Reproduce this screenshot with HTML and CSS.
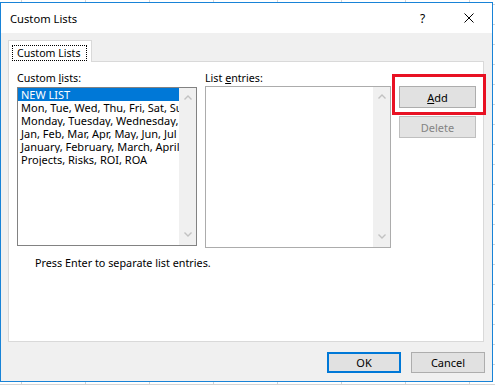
FILE: index.html
```html
<!DOCTYPE html>
<html lang="en">
<head>
    <meta charset="UTF-8">
    <title>Custom Lists</title>
    <link rel="stylesheet" href="styles.css">
</head>
<body>
    <div class="dialog">
        <div class="titlebar">
            <span class="title">Custom Lists</span>
            <span class="help">?</span>
            <span class="close">
                <svg width="10" height="10" viewBox="0 0 10 10">
                    <path d="M0.5 0.5 L9.5 9.5 M9.5 0.5 L0.5 9.5" stroke="#000" stroke-width="1" fill="none"/>
                </svg>
            </span>
        </div>

        <div class="content">
            <div class="tabs">
                <div class="tab"><span class="tab-label">Custom Lists</span></div>
            </div>
            <div class="panel">
                <div class="columns">
                    <div class="col col-lists">
                        <div class="field-label">Custom <u>l</u>ists:</div>
                        <div class="listbox lists-box">
                            <ul class="items">
                                <li class="selected">NEW LIST</li>
                                <li>Mon, Tue, Wed, Thu, Fri, Sat, Sun</li>
                                <li>Monday, Tuesday, Wednesday, Thursday</li>
                                <li>Jan, Feb, Mar, Apr, May, Jun, Jul</li>
                                <li>January, February, March, April</li>
                                <li>Projects, Risks, ROI, ROA</li>
                            </ul>
                            <div class="scrollbar">
                                <svg width="8" height="5" viewBox="0 0 8 5"><path d="M0.5 4.5 L4 1 L7.5 4.5" stroke="#c2c2c2" stroke-width="1.4" fill="none"/></svg>
                                <svg width="8" height="5" viewBox="0 0 8 5"><path d="M0.5 0.5 L4 4 L7.5 0.5" stroke="#c2c2c2" stroke-width="1.4" fill="none"/></svg>
                            </div>
                        </div>
                    </div>

                    <div class="col col-entries">
                        <div class="field-label">List <u>e</u>ntries:</div>
                        <div class="listbox entries-box">
                            <div class="items"></div>
                            <div class="scrollbar">
                                <svg width="8" height="5" viewBox="0 0 8 5"><path d="M0.5 4.5 L4 1 L7.5 4.5" stroke="#c2c2c2" stroke-width="1.4" fill="none"/></svg>
                                <svg width="8" height="5" viewBox="0 0 8 5"><path d="M0.5 0.5 L4 4 L7.5 0.5" stroke="#c2c2c2" stroke-width="1.4" fill="none"/></svg>
                            </div>
                        </div>
                    </div>

                    <div class="col col-buttons">
                        <div class="add-wrap">
                            <button class="btn"><u>A</u>dd</button>
                        </div>
                        <button class="btn" disabled>Delete</button>
                    </div>
                </div>
                <p class="hint">Press Enter to separate list entries.</p>
            </div>
        </div>

        <div class="footer">
            <button class="btn btn-ok">OK</button>
            <button class="btn">Cancel</button>
        </div>
    </div>
</body>
</html>
```

FILE: styles.css
```css
* {
    box-sizing: border-box;
}

body {
    margin: 0;
    padding-top: 2px;
    font-family: 'Noto Sans', 'Liberation Sans', sans-serif;
    font-size: 11px;
    color: #000;
    background-color: #fff;
    /* spreadsheet grid behind the dialog */
    background-image:
        linear-gradient(to right, #d4d4d4 1px, transparent 1px),
        linear-gradient(to bottom, #d4d4d4 1px, transparent 1px);
    background-size: 64px 20px;
    background-position: 21px 4px;
    height: 385px;
    overflow: hidden;
}

.dialog {
    width: 493px;
    height: 380px;
    border: 1px solid #1883d7;
    background-color: #f0f0f0;
    display: flex;
    flex-direction: column;
}

/* title bar */
.titlebar {
    height: 30px;
    background-color: #fff;
    display: flex;
    align-items: center;
    padding-left: 9px;
}

.title {
    font-size: 11.2px;
    flex: 1;
}

.help {
    font-size: 12px;
    width: 8px;
    margin-right: 36px;
}

.close {
    display: flex;
    width: 10px;
    margin-right: 18px;
}

/* tab + panel */
.content {
    padding: 7px 8px 0 7px;
}

.tabs {
    display: flex;
}

.tab {
    position: relative;
    z-index: 1;
    width: 84px;
    height: 22px;
    margin-bottom: -1px;
    padding: 4px 0 0 3px;
    background-color: #fff;
    border: 1px solid #d9d9d9;
    border-bottom: none;
}

.tab-label {
    display: block;
    width: 75px;
    height: 16px;
    padding-left: 4px;
    border: 1px dotted #000;
    font-size: 10.6px;
    line-height: 14px;
}

.panel {
    height: 281px;
    background-color: #fff;
    border: 1px solid #d9d9d9;
    padding: 8px 0 0 8px;
}

.columns {
    display: flex;
    gap: 8px;
}

.field-label {
    height: 16px;
    line-height: 16px;
    font-size: 10.7px;
}

.listbox {
    display: flex;
    background-color: #fff;
}

.lists-box {
    width: 180px;
    height: 159px;
    margin-top: 1px;
    border: 1px solid #828282;
}

.entries-box {
    width: 186px;
    height: 162px;
    border: 1px solid #acacac;
}

.items {
    flex: 1;
    list-style: none;
    margin: 0;
    padding: 0;
    overflow: hidden;
}

.items li {
    height: 13px;
    line-height: 13px;
    padding-left: 3px;
    white-space: nowrap;
    overflow: hidden;
}

.items li.selected {
    background-color: #0078d7;
    color: #fff;
}

.scrollbar {
    width: 17px;
    background-color: #f0f0f0;
    display: flex;
    flex-direction: column;
    justify-content: space-between;
    align-items: center;
    padding: 7px 0 8px;
}

.col-buttons {
    display: flex;
    flex-direction: column;
    gap: 8px;
    padding-top: 16px;
}

.btn {
    width: 77px;
    height: 22px;
    padding: 0;
    font-family: inherit;
    font-size: 11px;
    color: #000;
    background-color: #e1e1e1;
    border: 1px solid #adadad;
}

.btn:disabled {
    color: #838383;
    border-color: #bfbfbf;
    background-color: #e3e3e3;
}

/* red highlight drawn around the Add button */
.add-wrap {
    position: relative;
    height: 22px;
}

.add-wrap::after {
    content: "";
    position: absolute;
    left: -7px;
    top: -12px;
    right: -10px;
    bottom: -7px;
    border: 3px solid #e81123;
}

.hint {
    margin: 7px 0 0 18px;
    line-height: 16px;
    font-size: 10.8px;
}

/* bottom buttons */
.footer {
    flex: 1;
    display: flex;
    justify-content: flex-end;
    gap: 10px;
    padding: 10px 7px 0 0;
}

.footer .btn {
    width: 74px;
    height: 21px;
}

.btn-ok {
    border: 2px solid #0078d7;
}
```
